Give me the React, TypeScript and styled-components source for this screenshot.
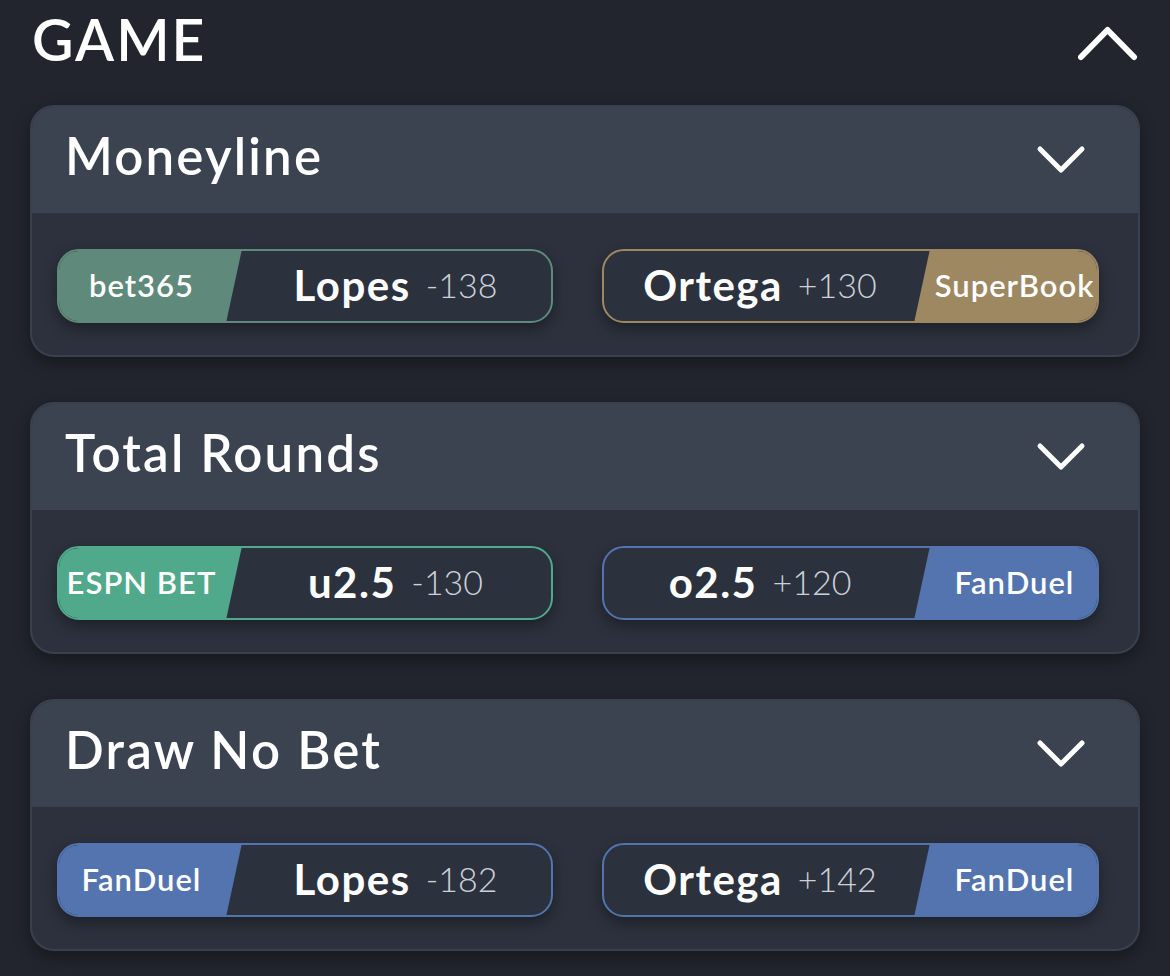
import styled, { createGlobalStyle } from 'styled-components';

const GlobalStyle = createGlobalStyle`
  html, body {
    margin: 0;
    padding: 0;
    background: #22252e;
  }
  body {
    font-family: Lato, "Open Sans", sans-serif;
    color: #fff;
  }
`;

const Page = styled.div`
  width: 1170px;
  height: 976px;
  box-sizing: border-box;
  padding: 0 30px 0 30px;
  background: #22252e;
  overflow: hidden;
`;

const TopBar = styled.div`
  display: flex;
  align-items: center;
  justify-content: space-between;
  height: 86px;
  padding: 0 2px 0 2px;
`;

const SectionTitle = styled.h1`
  margin: 0 0 8px 0;
  font-size: 57px;
  font-weight: 600;
  letter-spacing: 2px;
  line-height: 1;
`;

const IconButton = styled.button`
  display: flex;
  align-items: center;
  justify-content: center;
  padding: 0;
  border: none;
  background: none;
  color: #fff;
  cursor: pointer;
`;

const CardList = styled.div`
  display: flex;
  flex-direction: column;
  gap: 45px;
  margin-top: 19px;
`;

const Card = styled.section`
  border-radius: 24px;
  overflow: hidden;
  background: #2c313d;
  border: 2px solid #3a404d;
  box-shadow: 0 6px 16px rgba(0, 0, 0, 0.35);
`;

const CardHeader = styled.div`
  display: flex;
  align-items: center;
  justify-content: space-between;
  height: 106px;
  padding: 0 52px 0 33px;
  background: #3c4350;
`;

const CardTitle = styled.h2`
  margin: 0 0 9px 0;
  font-size: 51px;
  font-weight: 600;
  letter-spacing: 2.2px;
  line-height: 1;
`;

const CardBody = styled.div`
  display: grid;
  grid-template-columns: 496px 497px;
  column-gap: 49px;
  padding: 36px 0 32px 25px;
`;

const Pill = styled.div<{ $color: string }>`
  position: relative;
  display: flex;
  height: 74px;
  box-sizing: border-box;
  border: 2px solid ${({ $color }) => $color};
  border-radius: 22px;
  overflow: hidden;
  background: #2c313e;
  box-shadow: 0 6px 14px rgba(0, 0, 0, 0.35);
`;

const Book = styled.div<{ $color: string; $side: 'left' | 'right' }>`
  display: flex;
  align-items: center;
  justify-content: center;
  flex-shrink: 0;
  width: 185px;
  margin: -2px;
  padding-bottom: 3px;
  box-sizing: border-box;
  background: ${({ $color }) => $color};
  font-size: 31px;
  font-weight: 600;
  letter-spacing: 1px;
  white-space: nowrap;
  color: #fff;
  ${({ $side }) =>
    $side === 'left'
      ? `
    padding-right: 16px;
    clip-path: polygon(0 0, 100% 0, calc(100% - 16px) 100%, 0 100%);
  `
      : `
    padding-left: 16px;
    clip-path: polygon(16px 0, 100% 0, 100% 100%, 0 100%);
  `}
`;

const Selection = styled.div`
  flex: 1;
  display: flex;
  align-items: center;
  justify-content: center;
  gap: 15px;
  padding-bottom: 3px;
`;

const Name = styled.span`
  font-size: 42px;
  font-weight: 700;
  letter-spacing: 1.5px;
  color: #fff;
`;

const Odds = styled.span`
  font-size: 34px;
  font-weight: 300;
  color: #cdd1da;
`;

const ChevronUp = () => (
  <svg width="60" height="40" viewBox="0 0 60 40" fill="none">
    <path
      d="M3 34 L29.5 7 L56 34"
      stroke="currentColor"
      strokeWidth="6"
      strokeLinecap="round"
      strokeLinejoin="round"
    />
  </svg>
);

const ChevronDown = () => (
  <svg width="50" height="32" viewBox="0 0 50 32" fill="none">
    <path
      d="M4 5 L25 26 L46 5"
      stroke="currentColor"
      strokeWidth="5"
      strokeLinecap="round"
      strokeLinejoin="round"
    />
  </svg>
);

type Side = {
  book: string;
  color: string;
  name: string;
  odds: string;
};

type Market = {
  title: string;
  left: Side;
  right: Side;
};

const BET365 = '#5f8a7b';
const SUPERBOOK = '#9e8862';
const ESPN = '#4fa98a';
const FANDUEL = '#5374ae';

const markets: Market[] = [
  {
    title: 'Moneyline',
    left: { book: 'bet365', color: BET365, name: 'Lopes', odds: '-138' },
    right: { book: 'SuperBook', color: SUPERBOOK, name: 'Ortega', odds: '+130' },
  },
  {
    title: 'Total Rounds',
    left: { book: 'ESPN BET', color: ESPN, name: 'u2.5', odds: '-130' },
    right: { book: 'FanDuel', color: FANDUEL, name: 'o2.5', odds: '+120' },
  },
  {
    title: 'Draw No Bet',
    left: { book: 'FanDuel', color: FANDUEL, name: 'Lopes', odds: '-182' },
    right: { book: 'FanDuel', color: FANDUEL, name: 'Ortega', odds: '+142' },
  },
];

const OddsPill = ({ side, position }: { side: Side; position: 'left' | 'right' }) => {
  const book = (
    <Book $color={side.color} $side={position}>
      {side.book}
    </Book>
  );
  return (
    <Pill $color={side.color}>
      {position === 'left' && book}
      <Selection>
        <Name>{side.name}</Name>
        <Odds>{side.odds}</Odds>
      </Selection>
      {position === 'right' && book}
    </Pill>
  );
};

export default function App() {
  return (
    <>
      <GlobalStyle />
      <Page>
        <TopBar>
          <SectionTitle>GAME</SectionTitle>
          <IconButton aria-label="Collapse">
            <ChevronUp />
          </IconButton>
        </TopBar>
        <CardList>
          {markets.map((m) => (
            <Card key={m.title}>
              <CardHeader>
                <CardTitle>{m.title}</CardTitle>
                <IconButton aria-label="Expand">
                  <ChevronDown />
                </IconButton>
              </CardHeader>
              <CardBody>
                <OddsPill side={m.left} position="left" />
                <OddsPill side={m.right} position="right" />
              </CardBody>
            </Card>
          ))}
        </CardList>
      </Page>
    </>
  );
}
